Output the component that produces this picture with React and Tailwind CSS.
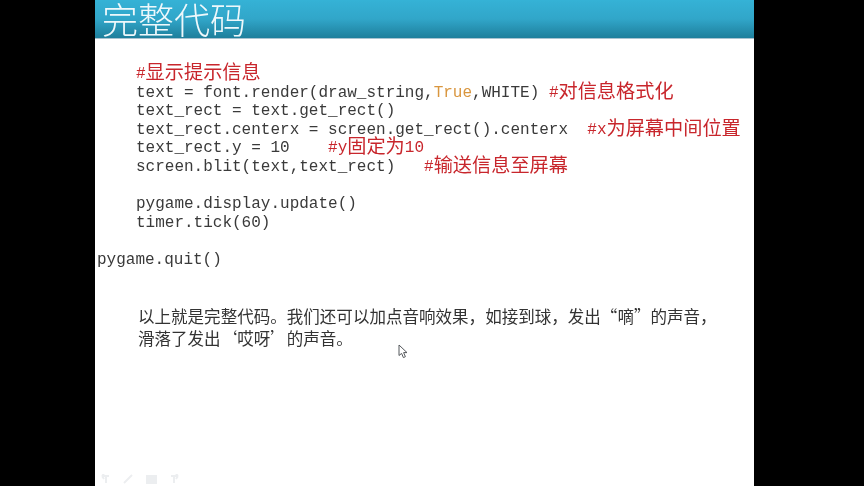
const MONO = "font-['Liberation_Mono','Noto_Sans_CJK_SC',monospace]";

// Chinese glyphs are larger than the code glyphs on this slide
const Zh = ({ children }) => (
  <span className="align-[-1px] font-['Noto_Sans_CJK_SC',sans-serif] text-[19.2px] leading-[0]">{children}</span>
);

const Note = ({ children }) => <span className="text-[#c8262c]">{children}</span>;

const CodeLine = ({ children }) => (
  <div className="h-[18.6px] whitespace-pre text-[16px] leading-[18.6px] text-[#3a3a3a]">{children}</div>
);

const SlideControls = () => (
  <div className="mt-auto ml-[3px] mb-[2px] flex h-[10px] items-center gap-[13px] text-[#eceef0]">
    <svg width="12" height="10" viewBox="0 0 12 10" fill="none" stroke="currentColor" strokeWidth="2">
      <path d="M11 2H4M4 2L6 0M4 2L6 5M8 2V9" />
    </svg>
    <svg width="10" height="10" viewBox="0 0 10 10" fill="none" stroke="currentColor" strokeWidth="2">
      <path d="M1 9L9 1" />
    </svg>
    <svg width="11" height="9" viewBox="0 0 11 9" fill="currentColor">
      <path d="M0 0H11V9H0Z" />
    </svg>
    <svg width="12" height="10" viewBox="0 0 12 10" fill="none" stroke="currentColor" strokeWidth="2">
      <path d="M1 2H8M8 2L6 0M8 2L6 5M4 2V9" />
    </svg>
  </div>
);

const Cursor = () => (
  <svg
    className="absolute left-[303px] top-[344px]"
    width="11"
    height="15"
    viewBox="0 0 11 15"
    fill="#ffffff"
    stroke="#55585c"
    strokeWidth="1"
  >
    <path d="M1 1V11.5L3.6 9.4L5.4 13.6L7.4 12.7L5.6 8.6H9Z" />
  </svg>
);

export default function App() {
  return (
    <div className="flex h-[486px] w-[864px] overflow-hidden bg-black">
      <div className="ml-[95px] w-[659px]">
        <div className="relative flex h-full flex-col bg-white blur-[0.4px]">
          <div className="h-[39px] border-b border-[#a9c3d0] bg-linear-to-b from-[#35b2d6] via-[#31a6c9] to-[#1e7f9c] pl-[7px]">
            <h1 className="font-['Noto_Sans_CJK_SC',sans-serif] text-[36px] font-light leading-[36px] text-[#eef8fb]">
              完整代码
            </h1>
          </div>

          <div className={`${MONO} mt-[26px] pl-[41px]`}>
            <CodeLine>
              <Note>#<Zh>显示提示信息</Zh></Note>
            </CodeLine>
            <CodeLine>
              text = font.render(draw_string,<span className="text-[#d9963f]">True</span>,WHITE) <Note>#<Zh>对信息格式化</Zh></Note>
            </CodeLine>
            <CodeLine>text_rect = text.get_rect()</CodeLine>
            <CodeLine>
              text_rect.centerx = screen.get_rect().centerx  <Note>#x<Zh>为屏幕中间位置</Zh></Note>
            </CodeLine>
            <CodeLine>
              text_rect.y = 10    <Note>#y<Zh>固定为</Zh>10</Note>
            </CodeLine>
            <CodeLine>
              screen.blit(text,text_rect)   <Note>#<Zh>输送信息至屏幕</Zh></Note>
            </CodeLine>
            <CodeLine> </CodeLine>
            <CodeLine>pygame.display.update()</CodeLine>
            <CodeLine>timer.tick(60)</CodeLine>
            <CodeLine> </CodeLine>
            <div className="-ml-[39px]">
              <CodeLine>pygame.quit()</CodeLine>
            </div>
          </div>

          <div className="mt-[35px] pl-[43px] pr-[20px] font-['Noto_Sans_CJK_SC',sans-serif] text-[16.55px] leading-[22px] text-[#333333]">
            <p>以上就是完整代码。我们还可以加点音响效果，如接到球，发出“嘀”的声音，</p>
            <p>滑落了发出‘哎呀’的声音。</p>
          </div>

          <SlideControls />
          <Cursor />
        </div>
      </div>
    </div>
  );
}
